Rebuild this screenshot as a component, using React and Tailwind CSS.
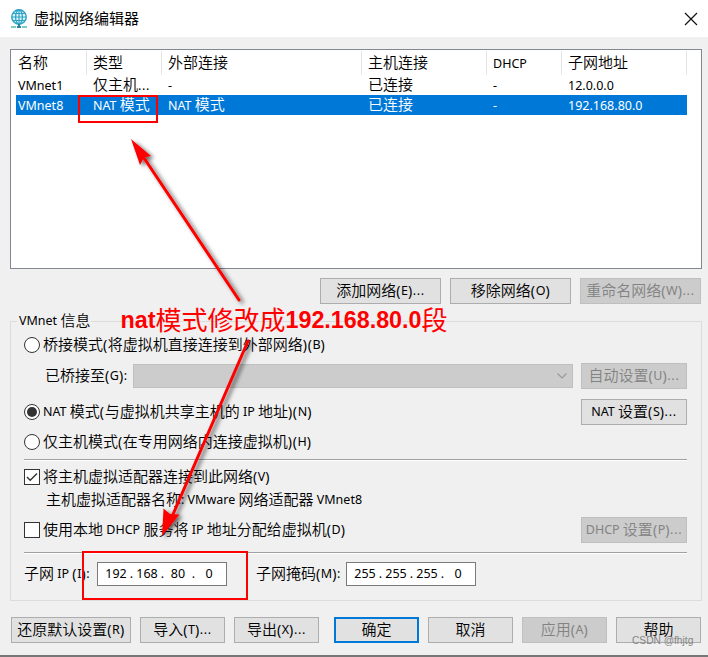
import React from "react";

const CJK = "font-['Noto_Sans_CJK_SC',sans-serif]";
const LATIN = "font-['Noto_Sans','Noto_Sans_CJK_SC',sans-serif]";

// Splits mixed text so Chinese, brackets and Latin runs keep their own sizes.
function T({ children, className = "", low = false }) {
  const runs = children.match(/[\u4e00-\u9fff]+|[()]|\.\.\.|[^\u4e00-\u9fff().]+|\./g) || [];
  const drop = low ? "relative top-px" : "";
  return (
    <span className={`inline-flex items-center whitespace-pre leading-5 ${className}`}>
      {runs.map((r, i) => {
        let style = `${LATIN} ${drop} text-[12.5px]`;
        if (/[\u4e00-\u9fff]/.test(r)) style = `${CJK} relative -top-px text-[15px] font-[350]`;
        else if (/[()]/.test(r)) style = `${LATIN} text-[14px] tracking-[0.6px]`;
        else if (r === "...") style = `${LATIN} ${drop} text-[12.5px] tracking-[0.7px]`;
        return <span key={i} className={style}>{r}</span>;
      })}
    </span>
  );
}

function Button({ children, disabled, primary, className = "" }) {
  const tone = disabled
    ? "border border-[#bfbfbf] bg-[#cccccc] text-[#838383]"
    : primary
    ? "border-2 border-[#0078d7] bg-[#e1e1e1]"
    : "border border-[#adadad] bg-[#e1e1e1]";
  return (
    <button className={`flex h-[26px] shrink-0 items-center justify-center ${tone} ${className}`}>
      <T>{children}</T>
    </button>
  );
}

function Radio({ checked }) {
  return (
    <span className="flex h-4 w-4 shrink-0 items-center justify-center rounded-full border border-[#333] bg-white">
      {checked && <span className="h-2.5 w-2.5 rounded-full bg-[#333]" />}
    </span>
  );
}

function Check({ checked }) {
  return (
    <span className="flex h-4 w-4 shrink-0 items-center justify-center border border-[#333] bg-white">
      {checked && (
        <svg width="14" height="14" viewBox="0 0 14 14" fill="none" stroke="#333" strokeWidth="1.4">
          <path d="M2 7 5.2 10.2 12 3.5" />
        </svg>
      )}
    </span>
  );
}

const cols = "grid grid-cols-[75px_75px_200px_125px_75px_125px]";

function Row({ cells, className = "" }) {
  return (
    <div className={`${cols} ml-[5px] h-5 w-[671px] items-center ${className}`}>
      {cells.map((c, i) => (
        <T key={i} low className="pl-0.5">{c}</T>
      ))}
    </div>
  );
}

function IpBox({ parts }) {
  return (
    <div className={`flex h-6 w-[130px] items-center border border-[#7a7a7a] bg-white pl-[7px] text-[12.5px] leading-5 ${LATIN}`}>
      {parts.map((p, i) => (
        <React.Fragment key={i}>
          <span className="w-[22px] text-center">{p}</span>
          {i < 3 && <span className="w-[9px] text-center">.</span>}
        </React.Fragment>
      ))}
    </div>
  );
}

function Globe() {
  return (
    <svg width="18" height="20" viewBox="0 0 18 20" fill="none">
      <circle cx="9" cy="8" r="7.2" fill="#e4f6fb" stroke="#2ba3c6" strokeWidth="1.5" />
      <ellipse cx="9" cy="8" rx="3.4" ry="7.2" stroke="#2ba3c6" strokeWidth="1.3" />
      <path d="M9 1v14M2 8h14M3 4.5h12M3 11.5h12" stroke="#2ba3c6" strokeWidth="1.2" />
      <path d="M1 18h5M12 18h5" stroke="#58bda8" strokeWidth="1.6" />
      <path d="M9 15v2M7 18h4" stroke="#2784ad" strokeWidth="2" />
    </svg>
  );
}

function Divider() {
  return <div className="h-0.5 w-[663px] shrink-0 border-t border-[#a0a0a0] bg-white" />;
}

function Annotations() {
  return (
    <div className="pointer-events-none absolute inset-0">
      <svg width="708" height="657" viewBox="0 0 708 657">
        <defs>
          <filter id="shade" x="-20%" y="-20%" width="150%" height="150%">
            <feDropShadow dx="3" dy="2" stdDeviation="2" floodColor="#000" floodOpacity="0.6" />
          </filter>
        </defs>
        <g fill="none" stroke="#f00" strokeWidth="2">
          <rect x="79" y="96" width="78" height="26" />
          <rect x="83" y="552" width="164" height="47" />
        </g>
        <g filter="url(#shade)" fill="#f00" stroke="#f00">
          <path d="M239 300 142 155" strokeWidth="3" strokeLinecap="round" />
          <path d="M131 139 151 156 144 157.500 140 165Z" stroke="none" />
          <path d="M248 341 171 519" strokeWidth="3" strokeLinecap="round" />
          <path d="M162 536 163.500 508.500 170 514 179.500 514.500Z" stroke="none" />
        </g>
      </svg>
      <div className="absolute left-[120.5px] top-[305px] flex h-[30px] items-center whitespace-pre text-[23.3px] leading-[30px] text-[#f00]">
        <span className="font-['Liberation_Sans',sans-serif] font-bold">nat</span>
        <span className={`${CJK} relative -top-px text-[26px]`}>模式修改成</span>
        <span className="font-['Liberation_Sans',sans-serif] font-bold">192.168.80.0</span>
        <span className={`${CJK} relative -top-px text-[26px]`}>段</span>
      </div>
      <span className="absolute left-[632px] top-[633px] font-['Liberation_Sans',sans-serif] text-[10.2px] leading-4 text-[#858585]">
        CSDN @fhjtg
      </span>
    </div>
  );
}

export default function App() {
  return (
    <div className="relative flex h-[657px] w-[708px] flex-col overflow-hidden border-b-2 border-[#777] bg-[#f0f0f0] text-black">
      <header className="flex h-[37px] shrink-0 items-center bg-white pl-[10px] pr-[10px]">
        <Globe />
        <span className={`${CJK} ml-1.5 flex-1 -translate-y-px text-[15px] leading-5`}>虚拟网络编辑器</span>
        <svg width="14" height="14" viewBox="0 0 14 14" stroke="#111" strokeWidth="1.2">
          <path d="M1 1 13 13M13 1 1 13" />
        </svg>
      </header>

      <section className="ml-[10px] mt-3 h-[220px] w-[692px] shrink-0 border border-[#828790] bg-white pt-px">
        <div className={`${cols} ml-px h-6 w-[676px]`}>
          {["名称", "类型", "外部连接", "主机连接", "DHCP", "子网地址"].map((h) => (
            <div key={h} className="flex items-center border-r border-[#e5e5e5] pl-1.5">
              <T low>{h}</T>
            </div>
          ))}
        </div>
        <Row cells={["VMnet1", "仅主机...", "-", "已连接", "-", "12.0.0.0"]} />
        <Row cells={["VMnet8", "NAT 模式", "NAT 模式", "已连接", "-", "192.168.80.0"]} className="bg-[#0078d7] text-white" />
      </section>

      <div className="ml-[320px] mt-[9px] flex shrink-0 gap-[9px]">
        <Button className="w-[121px]">添加网络(E)...</Button>
        <Button className="w-[121px]">移除网络(O)</Button>
        <Button className="w-[121px]" disabled>重命名网络(W)...</Button>
      </div>

      <section className="ml-[10px] mt-[17px] flex h-[280px] w-[692px] shrink-0 flex-col border border-[#dcdcdc] pl-[13px]">
        <div className="-ml-[7px] -mt-[11px] flex h-5 w-[74px] shrink-0 items-center bg-[#f0f0f0] pl-0.5">
          <T>VMnet 信息</T>
        </div>
        <div className="mt-[4px] flex h-5 shrink-0 items-center gap-[3px]">
          <Radio />
          <T>桥接模式(将虚拟机直接连接到外部网络)(B)</T>
        </div>
        <div className="mt-2 flex h-[26px] shrink-0 items-center">
          <div className="w-[109px] pl-[21px]"><T>已桥接至(G):</T></div>
          <div className="flex h-6 w-[440px] items-center justify-end border border-[#bfbfbf] bg-[#cccccc] pr-1">
            <svg width="12" height="8" viewBox="0 0 12 8" fill="none" stroke="#9a9a9a" strokeWidth="1.2">
              <path d="M1.5 1.5 6 6 10.5 1.5" />
            </svg>
          </div>
          <Button className="ml-2 w-[106px]" disabled>自动设置(U)...</Button>
        </div>
        <div className="mt-[10px] flex h-[26px] shrink-0 items-center gap-[3px]">
          <Radio checked />
          <T className="w-[535px]">NAT 模式(与虚拟机共享主机的 IP 地址)(N)</T>
          <Button className="w-[106px]">NAT 设置(S)...</Button>
        </div>
        <div className="mb-[7px] mt-[7px] flex h-5 shrink-0 items-center gap-[3px]">
          <Radio />
          <T>仅主机模式(在专用网络内连接虚拟机)(H)</T>
        </div>
        <Divider />
        <div className="mt-1.5 flex h-5 shrink-0 items-center gap-[3px]">
          <Check checked />
          <T>将主机虚拟适配器连接到此网络(V)</T>
        </div>
        <div className="mt-[3px] flex h-5 shrink-0 items-center pl-[22px]">
          <T>主机虚拟适配器名称: VMware 网络适配器 VMnet8</T>
        </div>
        <div className="mb-[9px] mt-[7px] flex h-[26px] shrink-0 items-center gap-[3px]">
          <Check />
          <T className="w-[535px]">使用本地 DHCP 服务将 IP 地址分配给虚拟机(D)</T>
          <Button className="w-[106px]" disabled>DHCP 设置(P)...</Button>
        </div>
        <Divider />
        <div className="mt-2 flex h-6 shrink-0 items-center">
          <div className="w-[73px]"><T>子网 IP (I):</T></div>
          <IpBox parts={["192", "168", "80", "0"]} />
          <div className="w-[119px] pl-[29px]"><T>子网掩码(M):</T></div>
          <IpBox parts={["255", "255", "255", "0"]} />
        </div>
      </section>

      <footer className="ml-[11px] mt-4 flex shrink-0 gap-[9px]">
        <Button className="w-[120px]">还原默认设置(R)</Button>
        <Button className="w-[85px]">导入(T)...</Button>
        <Button className="w-[85px]">导出(X)...</Button>
        <Button className="ml-1.5 w-[85px]" primary>确定</Button>
        <Button className="w-[85px]">取消</Button>
        <Button className="w-[85px]" disabled>应用(A)</Button>
        <Button className="w-[85px]">帮助</Button>
      </footer>
      <Annotations />
    </div>
  );
}
